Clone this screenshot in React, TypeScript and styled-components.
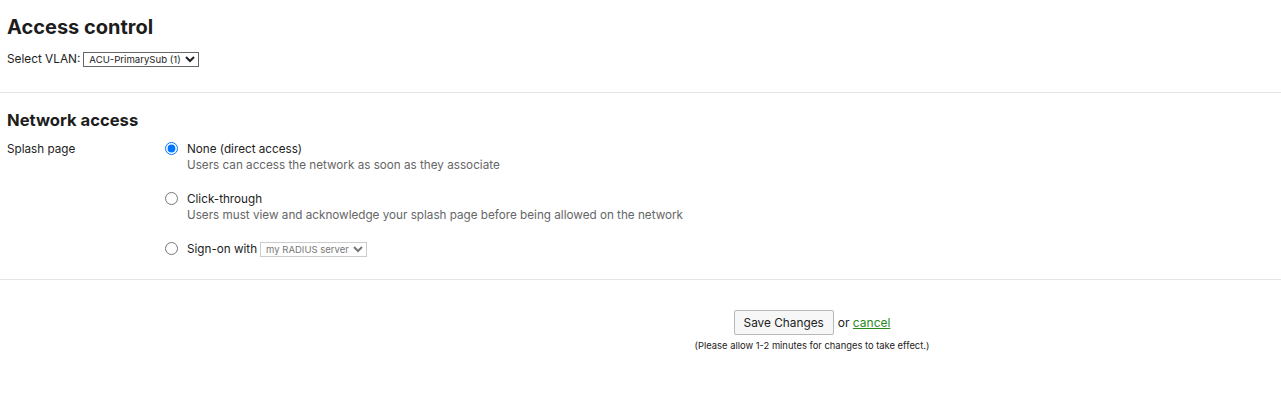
import React from "react";
import styled, { createGlobalStyle } from "styled-components";

const Global = createGlobalStyle`
  html, body { margin: 0; padding: 0; background: #fff; }
  body { font-family: Inter, "Noto Sans", Arial, sans-serif; color: #222; font-size: 13px; }
`;

const Page = styled.div`
  width: 1281px;
`;

const Header = styled.section`
  padding: 15px 7px 0;
  height: 93px;
  box-sizing: border-box;
  border-bottom: 1px solid #e4e4e4;
`;

const Title = styled.h1`
  margin: 0;
  font-size: 20px;
  line-height: 24px;
  font-weight: 700;
  color: #1d1d1d;
`;

const VlanRow = styled.div`
  margin-top: 12px;
  display: flex;
  align-items: center;
  gap: 3px;
  font-size: 11.8px;
  line-height: 16px;
`;

const SmallSelect = styled.select<{ $muted?: boolean }>`
  font-family: Inter, Arial, sans-serif;
  font-size: ${(p) => (p.$muted ? "9.5px" : "9.6px")};
  height: 15px;
  padding: 0 1px;
  border: 1px solid ${(p) => (p.$muted ? "#ccc" : "#666")};
  border-radius: 0;
  background: #fff;
  color: ${(p) => (p.$muted ? "#777" : "#222")};
  line-height: 12px;
`;

const Section = styled.section`
  padding: 17px 7px 0;
  height: 187px;
  box-sizing: border-box;
  border-bottom: 1px solid #e4e4e4;
`;

const SubTitle = styled.h2`
  margin: 0;
  font-size: 16.6px;
  line-height: 20px;
  font-weight: 700;
  color: #1d1d1d;
`;

const FieldRow = styled.div`
  margin-top: 11px;
  display: grid;
  grid-template-columns: 158px 1fr;
`;

const FieldLabel = styled.div`
  font-size: 11.7px;
  line-height: 16px;
`;

const Options = styled.div`
  display: flex;
  flex-direction: column;
  gap: 18px;
`;

const Option = styled.label`
  display: grid;
  grid-template-columns: 22px 1fr;
  font-size: 11.7px;
  line-height: 16px;
  cursor: pointer;
`;

const Radio = styled.input`
  margin: 1px 0 0 0;
  width: 13px;
  height: 13px;
`;

const OptionText = styled.div`
  display: flex;
  flex-direction: column;
`;

const OptionTitle = styled.span`
  color: #222;
  display: flex;
  align-items: center;
  gap: 3px;
`;

const OptionDesc = styled.span`
  color: #666;
`;

const Footer = styled.div`
  padding: 30px 0 0 343px;
  display: flex;
  flex-direction: column;
  align-items: center;
`;

const Actions = styled.div`
  display: flex;
  align-items: center;
  gap: 4px;
  font-size: 12px;
`;

const SaveButton = styled.button`
  font-family: Inter, Arial, sans-serif;
  font-size: 11.8px;
  height: 25px;
  padding: 0 9px;
  border: 1px solid #b9b9b9;
  border-radius: 2px;
  background: #f7f7f7;
  color: #222;
`;

const CancelLink = styled.a`
  color: #2a8a1e;
  text-decoration: underline;
`;

const Note = styled.div`
  margin-top: 5px;
  font-size: 9.4px;
  line-height: 12px;
  color: #222;
`;

export default function App() {
  return (
    <Page>
      <Global />
      <Header>
        <Title>Access control</Title>
        <VlanRow>
          Select VLAN:
          <SmallSelect defaultValue="a">
            <option value="a">ACU-PrimarySub (1)</option>
          </SmallSelect>
        </VlanRow>
      </Header>
      <Section>
        <SubTitle>Network access</SubTitle>
        <FieldRow>
          <FieldLabel>Splash page</FieldLabel>
          <Options>
            <Option>
              <Radio type="radio" name="splash" defaultChecked />
              <OptionText>
                <OptionTitle>None (direct access)</OptionTitle>
                <OptionDesc>Users can access the network as soon as they associate</OptionDesc>
              </OptionText>
            </Option>
            <Option>
              <Radio type="radio" name="splash" />
              <OptionText>
                <OptionTitle>Click-through</OptionTitle>
                <OptionDesc>
                  Users must view and acknowledge your splash page before being allowed on the network
                </OptionDesc>
              </OptionText>
            </Option>
            <Option>
              <Radio type="radio" name="splash" />
              <OptionText>
                <OptionTitle>
                  Sign-on with
                  <SmallSelect $muted defaultValue="r">
                    <option value="r">my RADIUS server</option>
                  </SmallSelect>
                </OptionTitle>
              </OptionText>
            </Option>
          </Options>
        </FieldRow>
      </Section>
      <Footer>
        <Actions>
          <SaveButton>Save Changes</SaveButton>
          <span>
            or <CancelLink href="#">cancel</CancelLink>
          </span>
        </Actions>
        <Note>(Please allow 1-2 minutes for changes to take effect.)</Note>
      </Footer>
    </Page>
  );
}
